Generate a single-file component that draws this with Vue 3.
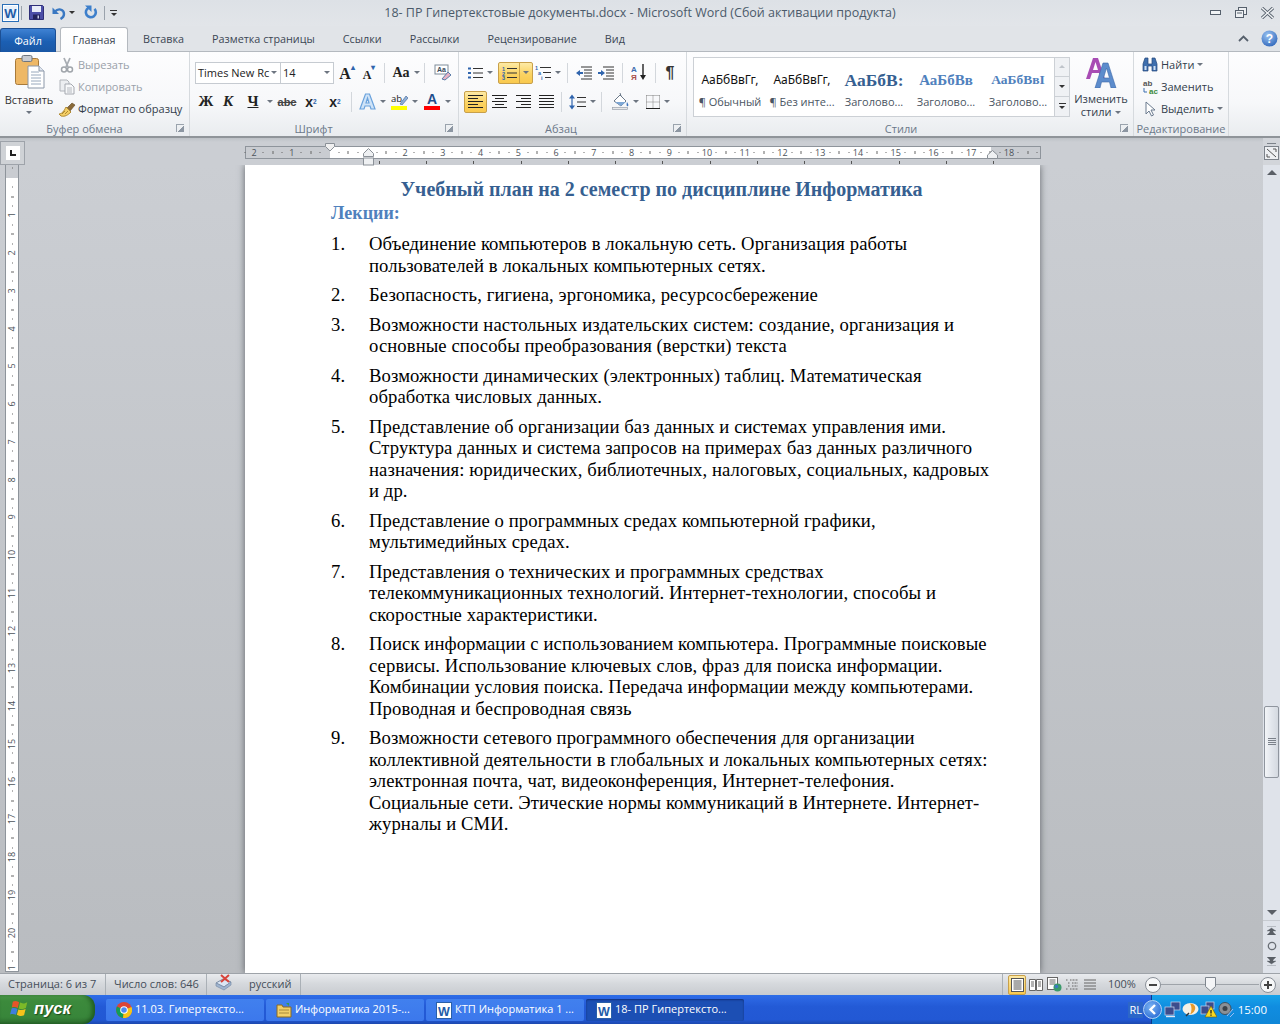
<script setup>
const tabs = ['Вставка', 'Разметка страницы', 'Ссылки', 'Рассылки', 'Рецензирование', 'Вид']

const styleItems = [
  { sample: 'АаБбВвГг,', label: '¶ Обычный', kind: 'normal' },
  { sample: 'АаБбВвГг,', label: '¶ Без инте...', kind: 'normal' },
  { sample: 'АаБбВ:', label: 'Заголово...', kind: 'h1' },
  { sample: 'АаБбВв', label: 'Заголово...', kind: 'h2' },
  { sample: 'АаБбВвІ', label: 'Заголово...', kind: 'h3' },
]

const items = [
  ['Объединение компьютеров в локальную сеть. Организация работы', 'пользователей в локальных компьютерных сетях.'],
  ['Безопасность, гигиена, эргономика, ресурсосбережение'],
  ['Возможности настольных издательских систем: создание, организация и', 'основные способы преобразования (верстки) текста'],
  ['Возможности динамических (электронных) таблиц. Математическая', 'обработка числовых данных.'],
  ['Представление об организации баз данных и системах управления ими.', 'Структура данных и система запросов на примерах баз данных различного', 'назначения: юридических, библиотечных, налоговых, социальных, кадровых', 'и др.'],
  ['Представление о программных средах компьютерной графики,', 'мультимедийных средах.'],
  ['Представления о технических и программных средствах', 'телекоммуникационных технологий. Интернет-технологии, способы и', 'скоростные характеристики.'],
  ['Поиск информации с использованием компьютера. Программные поисковые', 'сервисы. Использование ключевых слов, фраз для поиска информации.', 'Комбинации условия поиска. Передача информации между компьютерами.', 'Проводная и беспроводная связь'],
  ['Возможности сетевого программного обеспечения для организации', 'коллективной деятельности в глобальных и локальных компьютерных сетях:', 'электронная почта, чат, видеоконференция, Интернет-телефония.', 'Социальные сети. Этические нормы коммуникаций в Интернете. Интернет-', 'журналы и СМИ.'],
]

// линейка: 37.75px на сантиметр
const CM = 37.75
const H_ZERO = 83.5
const V_ZERO = 13
const hTicks = []
for (let i = -9; i <= 75; i++) {
  const v = i / 4
  if (i % 4 === 0) {
    if (v !== 0 && v !== 1) hTicks.push({ x: H_ZERO + v * CM, text: String(Math.abs(v)), type: 'num' })
  } else {
    hTicks.push({ x: H_ZERO + v * CM, text: '', type: i % 2 === 0 ? 'line' : 'dot' })
  }
}
const tabStops = []
for (let i = 1; i <= 14; i++) tabStops.push(85.5 + i * 47.25)

const vTicks = []
for (let i = -1; i <= 83; i++) {
  const v = i / 4
  if (i % 4 === 0 && i > 0) vTicks.push({ y: V_ZERO + v * CM, text: String(v), type: 'num' })
  else if (i % 4 !== 0) vTicks.push({ y: V_ZERO + v * CM, text: '', type: i % 2 === 0 ? 'line' : 'dot' })
}
// внизу от числа 21 видна только единица
vTicks.push({ y: 803, text: '1', type: 'num' })

const tasks = [
  { text: '11.03. Гипертексто...', icon: 'chrome' },
  { text: 'Информатика 2015-...', icon: 'folder' },
  { text: 'КТП Информатика 1 ...', icon: 'word' },
  { text: '18- ПР Гипертексто...', icon: 'word', active: true },
]
</script>

<template>
  <div class="app">
    <!-- заголовок окна -->
    <div class="titlebar">
      <div class="qat">
        <svg class="word-ico" width="17" height="18" viewBox="0 0 17 18">
          <rect x=".5" y=".5" width="16" height="17" fill="#fff" stroke="#2a6fb8"/>
          <rect x="2" y="2" width="13" height="14" fill="#e8f1fb"/>
          <text x="8.5" y="14" text-anchor="middle" font-size="13" font-weight="700" fill="#1f5da8" font-family="Liberation Sans, sans-serif">W</text>
        </svg>
        <i class="qat-sep"></i>
        <svg class="save-ico" width="15" height="15" viewBox="0 0 15 15">
          <path d="M.5.5h13l1 1v13H.5z" fill="#4c4fa8" stroke="#2f2f78"/>
          <rect x="3" y="1" width="9" height="6" fill="#e9edf8"/>
          <rect x="4" y="9.5" width="7" height="5" fill="#24245c"/>
          <rect x="8.5" y="10.5" width="1.5" height="3" fill="#c8cdea"/>
        </svg>
        <svg class="undo-ico" width="14" height="14" viewBox="0 0 14 14">
          <path d="M3 5.5c3-3.5 9-2.5 9 2.5 0 2.500-1.500 4-3.500 5" fill="none" stroke="#3a78c2" stroke-width="2.400"/>
          <path d="M.5 1.500v6.500h6.500z" fill="#3a78c2"/>
        </svg>
        <i class="caret dark qat-caret"></i>
        <svg class="redo-ico" width="14" height="15" viewBox="0 0 14 15">
          <path d="M4.500 2.800a5 5 0 1 0 6 1" fill="none" stroke="#3d7fcb" stroke-width="2.600"/>
          <path d="M1 .5h6.500V7z" fill="#3d7fcb"/>
        </svg>
        <i class="qat-sep second"></i>
        <span class="customize"><i></i><i class="caret dark"></i></span>
      </div>
      <div class="doc-title">18- ПР Гипертекстовые документы.docx  -  Microsoft Word (Сбой активации продукта)</div>
      <div class="win-btns">
        <svg width="12" height="6" viewBox="0 0 12 6"><rect x=".5" y=".5" width="10" height="4" fill="#f2f4f6" stroke="#56606c"/></svg>
        <svg width="13" height="12" viewBox="0 0 13 12">
          <rect x="3.500" y=".5" width="8" height="7" fill="#eef0f3" stroke="#56606c"/>
          <rect x=".5" y="3.500" width="8" height="7" fill="#eef0f3" stroke="#56606c"/>
          <rect x="2" y="5.500" width="5" height="1" fill="#56606c"/>
        </svg>
        <svg width="13" height="12" viewBox="0 0 13 12">
          <path d="M1 1l11 10M12 1L1 11" stroke="#56606c" stroke-width="3.200"/>
          <path d="M1 1l11 10M12 1L1 11" stroke="#f2f4f6" stroke-width="1.400"/>
        </svg>
      </div>
    </div>

    <!-- вкладки -->
    <div class="tabsbar">
      <div class="tab-file">Файл</div>
      <div class="tab-active">Главная</div>
      <div v-for="t in tabs" :key="t" class="tab">{{ t }}</div>
      <div class="tabs-right">
        <svg width="11" height="7" viewBox="0 0 11 7"><path d="M1 6l4.500-4.500L10 6" fill="none" stroke="#56606c" stroke-width="1.800"/></svg>
        <svg width="17" height="17" viewBox="0 0 17 17">
          <defs><radialGradient id="helpg" cx=".4" cy=".3" r=".8"><stop offset="0" stop-color="#9cc4f2"/><stop offset="1" stop-color="#2a62b8"/></radialGradient></defs>
          <circle cx="8.500" cy="8.500" r="8" fill="url(#helpg)"/>
          <text x="8.500" y="13" text-anchor="middle" font-size="12" font-weight="700" fill="#fff" font-family="Liberation Sans, sans-serif">?</text>
        </svg>
      </div>
    </div>

    <!-- лента -->
    <div class="ribbon">
      <!-- буфер обмена -->
      <section class="group g-clip">
        <div class="clip-body">
          <div class="paste">
            <svg width="30" height="34" viewBox="0 0 30 34">
              <rect x=".5" y="3.500" width="23" height="26" rx="2" fill="#eeb866" stroke="#a87a3a"/>
              <rect x="7" y=".5" width="10" height="6" rx="1.500" fill="#c9ccd2" stroke="#6e7680"/>
              <path d="M13 11h11l5 5v17H13z" fill="#fff" stroke="#8b97a8"/>
              <path d="M24 11v5h5" fill="#dfe6f0" stroke="#8b97a8"/>
              <path d="M16 17h8M16 20h10M16 23h10M16 26h10M16 29h10" stroke="#98a8bc"/>
            </svg>
            <span class="paste-label">Вставить</span>
            <i class="caret"></i>
          </div>
          <div class="clip-col">
            <div class="small-btn off">
              <svg width="16" height="16" viewBox="0 0 16 16">
                <path d="M5 1l4 9M11 1L7 10" stroke="#a8adb3" stroke-width="1.800"/>
                <circle cx="5" cy="12.500" r="2.500" fill="#fff" stroke="#a0a5ab" stroke-width="1.500"/>
                <circle cx="11" cy="12.500" r="2.500" fill="#fff" stroke="#a0a5ab" stroke-width="1.500"/>
              </svg>
              Вырезать
            </div>
            <div class="small-btn off">
              <svg width="16" height="16" viewBox="0 0 16 16">
                <path d="M1 1h7l2 2v9H1z" fill="#eceef1" stroke="#b0b4ba"/>
                <path d="M6 5h6l3 3v7H6z" fill="#f7f8fa" stroke="#a5a9b0"/>
                <path d="M8 9h5M8 11h5M8 13h5" stroke="#b5b9bf"/>
              </svg>
              Копировать
            </div>
            <div class="small-btn">
              <svg width="18" height="16" viewBox="0 0 18 16">
                <path d="M9 7l5-5 3 2-5 6z" fill="#8a6a3a" stroke="#5e4720" stroke-width=".6"/>
                <path d="M1 13c3 0 5-3 7-7l5 5c-3 3-6 5-10 4z" fill="#f4cf66" stroke="#b08a32"/>
                <path d="M4 13l3-3M7 13l3-3" stroke="#b08a32"/>
              </svg>
              Формат по образцу
            </div>
          </div>
        </div>
        <div class="group-label">Буфер обмена<i class="launcher"></i></div>
      </section>

      <!-- шрифт -->
      <section class="group g-font">
        <div class="rows">
          <div class="row">
            <div class="combo c-font"><span>Times New Rc</span><i class="caret"></i></div>
            <div class="combo c-size"><span>14</span><i class="caret"></i></div>
            <span class="tb w22 ml2 glyph-a big">A<sup class="up">▴</sup></span>
            <span class="tb w22 glyph-a small">A<sup class="down">▾</sup></span>
            <i class="sep"></i>
            <span class="tb w30 glyph-aa">Aa<i class="caret"></i></span>
            <i class="sep s2"></i>
            <span class="tb w22">
              <svg width="18" height="17" viewBox="0 0 18 17">
                <rect x="1" y="1" width="13" height="9" fill="#fff" stroke="#7f8b99"/>
                <text x="7.500" y="8" text-anchor="middle" font-size="7" font-weight="700" fill="#3a4a5c" font-family="Liberation Sans, sans-serif">Aa</text>
                <path d="M8 15l6-7 3 3-6 5z" fill="#e6b2c6" stroke="#5a7ca8"/>
              </svg>
            </span>
          </div>
          <div class="row r2">
            <span class="tb w22 fx">Ж</span>
            <span class="tb w22 fx it">К</span>
            <span class="tb w36 fx ul"><u>Ч</u><i class="caret"></i></span>
            <span class="tb w24 fx strike">abc</span>
            <span class="tb w24 fx script">x<sub>2</sub></span>
            <span class="tb w24 fx script">x<sup>2</sup></span>
            <i class="sep s3"></i>
            <span class="tb w30">
              <svg width="17" height="17" viewBox="0 0 17 17">
                <path d="M6.500 1h4L16 16h-4l-1-3H6l-1 3H1zM7 10h3L8.500 5z" fill="#cfe3f7" stroke="#6aa2dc" stroke-width="1.200"/>
              </svg>
              <i class="caret"></i>
            </span>
            <span class="tb w34">
              <span class="hl-ico">
                <svg width="17" height="12" viewBox="0 0 17 12">
                  <text x="0" y="9" font-size="9.500" fill="#222" font-family="Open Sans, sans-serif">ab</text>
                  <path d="M9 11l6-8 2 2-6 7z" fill="#8fb0d8" stroke="#4f6f9c" stroke-width=".7"/>
                </svg>
                <b class="hl-bar yellow"></b>
              </span>
              <i class="caret"></i>
            </span>
            <span class="tb w32">
              <span class="hl-ico">
                <span class="color-a">A</span>
                <b class="hl-bar red"></b>
              </span>
              <i class="caret"></i>
            </span>
          </div>
        </div>
        <div class="group-label">Шрифт<i class="launcher"></i></div>
      </section>

      <!-- абзац -->
      <section class="group g-para">
        <div class="rows">
          <div class="row">
            <span class="tb w32">
              <svg width="15" height="14" viewBox="0 0 15 14">
                <path d="M0 1.500h3v2H0zM0 6h3v2H0zM0 10.500h3v2H0z" fill="#2f64ad"/>
                <path d="M5 2.500h10M5 7h10M5 11.500h10" stroke="#333"/>
              </svg>
              <i class="caret"></i>
            </span>
            <span class="num-split ml2">
              <span class="num-main">
                <svg width="15" height="14" viewBox="0 0 15 14">
                  <text x="0" y="4.500" font-size="5.500" font-weight="700" fill="#2f64ad" font-family="Liberation Sans, sans-serif">1</text>
                  <text x="0" y="9.500" font-size="5.500" font-weight="700" fill="#2f64ad" font-family="Liberation Sans, sans-serif">2</text>
                  <text x="0" y="14" font-size="5.500" font-weight="700" fill="#2f64ad" font-family="Liberation Sans, sans-serif">3</text>
                  <path d="M5 2.500h10M5 7h10M5 11.500h10" stroke="#333"/>
                </svg>
              </span>
              <span class="num-drop"><i class="caret"></i></span>
            </span>
            <span class="tb w26 ml2">
              <svg width="16" height="15" viewBox="0 0 16 15">
                <text x="0" y="5" font-size="5.500" font-weight="700" fill="#2f64ad" font-family="Liberation Sans, sans-serif">1</text>
                <text x="3" y="10" font-size="5.500" font-weight="700" fill="#2f64ad" font-family="Liberation Sans, sans-serif">a</text>
                <text x="6" y="15" font-size="5.500" font-weight="700" fill="#2f64ad" font-family="Liberation Sans, sans-serif">i</text>
                <path d="M5 2.500h11M8 7.500h8M10 12.500h6" stroke="#333"/>
              </svg>
              <i class="caret"></i>
            </span>
            <i class="sep s4"></i>
            <span class="tb w22">
              <svg width="16" height="14" viewBox="0 0 16 14">
                <path d="M5 1h11M8 4h8M8 7h8M8 10h8M5 13h11" stroke="#333"/>
                <path d="M0 7l4-3v2h3v2H4v2z" fill="#2f64ad"/>
              </svg>
            </span>
            <span class="tb w22">
              <svg width="16" height="14" viewBox="0 0 16 14">
                <path d="M5 1h11M8 4h8M8 7h8M8 10h8M5 13h11" stroke="#333"/>
                <path d="M7 7L3 4v2H0v2h3v2z" fill="#2f64ad"/>
              </svg>
            </span>
            <i class="sep s5"></i>
            <span class="tb w22">
              <svg width="16" height="17" viewBox="0 0 16 17">
                <text x="0" y="7.500" font-size="8" font-weight="700" fill="#3d6cad" font-family="Liberation Sans, sans-serif">А</text>
                <text x="0" y="16" font-size="8" font-weight="700" fill="#a8504a" font-family="Liberation Sans, sans-serif">Я</text>
                <path d="M12 0v13" stroke="#222" stroke-width="1.400"/>
                <path d="M9 11h6l-3 5z" fill="#222"/>
              </svg>
            </span>
            <i class="sep s5"></i>
            <span class="tb w22 pilcrow">¶</span>
          </div>
          <div class="row r2">
            <span class="tb align-on w23">
              <svg width="15" height="13" viewBox="0 0 15 13"><path d="M0 .5h15M0 3.500h10M0 6.500h15M0 9.500h10M0 12.500h15" stroke="#222"/></svg>
            </span>
            <span class="tb w24">
              <svg width="15" height="13" viewBox="0 0 15 13"><path d="M0 .5h15M3 3.500h9M0 6.500h15M3 9.500h9M0 12.500h15" stroke="#222"/></svg>
            </span>
            <span class="tb w24">
              <svg width="15" height="13" viewBox="0 0 15 13"><path d="M0 .5h15M5 3.500h10M0 6.500h15M5 9.500h10M0 12.500h15" stroke="#222"/></svg>
            </span>
            <span class="tb w23">
              <svg width="15" height="13" viewBox="0 0 15 13"><path d="M0 .5h15M0 3.500h15M0 6.500h15M0 9.500h15M0 12.500h15" stroke="#222"/></svg>
            </span>
            <i class="sep s6"></i>
            <span class="tb w30">
              <svg width="17" height="16" viewBox="0 0 17 16">
                <path d="M3 .5l3 4H0zM3 15.500l3-4H0z" fill="#2f64ad"/>
                <path d="M2.400 4h1.200v8H2.400z" fill="#2f64ad"/>
                <path d="M8 3.500h9M8 8h9M8 12.500h9" stroke="#333"/>
              </svg>
              <i class="caret"></i>
            </span>
            <i class="sep s7"></i>
            <span class="tb w36">
              <svg width="17" height="17" viewBox="0 0 17 17">
                <path d="M2 8l6-6 6 6-5 5z" fill="#fff" stroke="#6a7888"/>
                <path d="M3 9h11l-5 4z" fill="#7fa8d6"/>
                <path d="M8 0l1 3" stroke="#6a7888"/>
                <path d="M15 9c1 2 2 3 1 4s-2-.5-1-4z" fill="#3d74bd"/>
                <rect x=".5" y="14.500" width="15" height="2" fill="#e8e8e8" stroke="#9aa2ac" stroke-width=".7"/>
              </svg>
              <i class="caret"></i>
            </span>
            <span class="tb w30">
              <svg width="14" height="14" viewBox="0 0 14 14">
                <path d="M.5.5h13M.5 7h13M7 .5v13M.5.5v13M13.500.5v13" stroke="#7f7f7f" stroke-dasharray="1 1" fill="none"/>
                <path d="M0 13.500h14" stroke="#222"/>
              </svg>
              <i class="caret"></i>
            </span>
          </div>
        </div>
        <div class="group-label">Абзац<i class="launcher"></i></div>
      </section>

      <!-- стили -->
      <section class="group g-styles">
        <div class="styles-body">
          <div class="gallery">
            <div v-for="(s, i) in styleItems" :key="i" class="style-item" :class="s.kind">
              <div class="sample">{{ s.sample }}</div>
              <div class="style-name">{{ s.label }}</div>
            </div>
            <div class="gallery-scroll">
              <span class="up"><i class="caret up-c"></i></span>
              <span><i class="caret dark"></i></span>
              <span class="more"><b></b><i class="caret dark"></i></span>
            </div>
          </div>
          <div class="change-styles">
            <svg width="32" height="30" viewBox="0 0 32 30">
              <path d="M8 0h5l7 21h-4l-2-6H7l-2 6H1zM8 12h5L10.500 4z" fill="#a84cb4"/>
              <path d="M18 5h5l8 25h-5l-1.500-6h-8L15 30h-5zM18.500 20h6l-3-10z" fill="#5c8ccc" stroke="#3c68a8" stroke-width=".6"/>
            </svg>
            <span>Изменить</span>
            <span>стили <i class="caret"></i></span>
          </div>
        </div>
        <div class="group-label">Стили<i class="launcher"></i></div>
      </section>

      <!-- редактирование -->
      <section class="group g-edit">
        <div class="edit-col">
          <div class="small-btn">
            <svg width="16" height="15" viewBox="0 0 16 15">
              <path d="M1 7l2-6h3v6h4V1h3l2 6v7h-5V9H6v5H1z" fill="#3f6fae" stroke="#23467a" stroke-width=".7"/>
              <rect x="2.500" y="9" width="2" height="4" fill="#cfe0f4"/>
              <rect x="11.500" y="9" width="2" height="4" fill="#cfe0f4"/>
            </svg>
            Найти <i class="caret"></i>
          </div>
          <div class="small-btn">
            <svg width="16" height="16" viewBox="0 0 16 16">
              <text x="1" y="7" font-size="8" font-weight="700" fill="#555" font-family="Liberation Sans, sans-serif">ab</text>
              <text x="7" y="15" font-size="8" font-weight="700" fill="#3c8a3c" font-family="Liberation Sans, sans-serif">ac</text>
              <path d="M2 9v4h3" fill="none" stroke="#3a6fb0"/>
            </svg>
            Заменить
          </div>
          <div class="small-btn">
            <svg width="16" height="16" viewBox="0 0 16 16">
              <path d="M4 1v12l3-3 2.500 5 2-1-2.500-5h4z" fill="#fff" stroke="#6a7a8e"/>
            </svg>
            Выделить <i class="caret"></i>
          </div>
        </div>
        <div class="group-label">Редактирование</div>
      </section>
    </div>

    <!-- горизонтальная линейка -->
    <div class="ruler-row">
      <div class="tab-sel"><b><i></i></b></div>
      <div class="h-ruler">
        <div class="h-white"></div>
        <template v-for="(t, i) in hTicks" :key="i">
          <span class="ht" :class="t.type" :style="{ left: t.x + 'px' }">{{ t.text }}</span>
        </template>
        <svg class="indent-top" width="13" height="9" viewBox="0 0 13 9"><path d="M.5.5h9v3l-4.500 4.500L.5 3.500z" fill="#f0f0f0" stroke="#8a9097"/></svg>
        <svg class="indent-left" width="11" height="19" viewBox="0 0 11 19">
          <path d="M.5 5.500L5.500.5l5 5v3H.5z" fill="#eef0f2" stroke="#8a9097"/>
          <rect x=".5" y="10" width="10" height="7" fill="#eef0f2" stroke="#8a9097"/>
        </svg>
        <svg class="indent-right" width="11" height="9" viewBox="0 0 11 9"><path d="M.5 5L5.500.5l5 4.500v3.500H.5z" fill="#eef0f2" stroke="#8a9097"/></svg>
        <i v-for="s in tabStops" :key="s" class="stop" :style="{ left: s + 'px' }"></i>
      </div>
      <div class="ruler-toggle">
        <b></b>
        <svg width="15" height="14" viewBox="0 0 15 14">
          <rect x=".5" y=".5" width="14" height="13" fill="#eef0f3" stroke="#7c828a"/>
          <path d="M3 3l9 8M9 3h3v3M3 8v3h3" fill="none" stroke="#555"/>
        </svg>
      </div>
    </div>

    <!-- рабочая область -->
    <div class="main">
      <div class="rail">
        <div class="v-ruler">
          <template v-for="(t, i) in vTicks" :key="i">
            <span class="vt" :class="t.type" :style="{ top: t.y + 'px' }"><em>{{ t.text }}</em></span>
          </template>
        </div>
      </div>
      <div class="workspace">
        <div class="page">
          <h1 class="doc-h">Учебный план на 2 семестр по дисциплине Информатика</h1>
          <h2 class="doc-sub">Лекции:</h2>
          <ol class="doc-list">
            <li v-for="(lines, i) in items" :key="i">
              <span class="n">{{ i + 1 }}.</span>
              <div class="li-text">
                <div v-for="l in lines" :key="l">{{ l }}</div>
              </div>
            </li>
          </ol>
        </div>
      </div>
      <div class="vscroll">
        <i class="arr-up"></i>
        <div class="thumb"><b></b></div>
        <div class="spring"></div>
        <i class="arr-down"></i>
        <div class="browse">
          <svg width="9" height="9" viewBox="0 0 9 9"><path d="M0 .5h9M4.500 2L0 5h3v1L0 9h9L6 6V5h3z" fill="#5a5f66" stroke="#5a5f66" stroke-width=".3"/></svg>
          <svg width="10" height="10" viewBox="0 0 10 10"><circle cx="5" cy="5" r="3.700" fill="none" stroke="#6a6f76" stroke-width="1.300"/></svg>
          <svg width="9" height="9" viewBox="0 0 9 9"><path d="M0 8.500h9M4.500 7L0 4h3V3L0 0h9L6 3v1h3z" fill="#5a5f66" stroke="#5a5f66" stroke-width=".3"/></svg>
        </div>
      </div>
    </div>

    <!-- строка состояния -->
    <div class="status">
      <span class="st-cell c1">Страница: 6 из 7</span>
      <span class="st-cell c2">Число слов: 646</span>
      <span class="st-cell c3">
        <svg width="18" height="18" viewBox="0 0 18 18">
          <path d="M1 9l7-4 8 3-7 5z" fill="#dbe6f4" stroke="#7a8ca6"/>
          <path d="M1 9v3l8 4 7-5V8l-7 5z" fill="#9fb4d0" stroke="#7a8ca6" stroke-width=".7"/>
          <path d="M6 1l8 7M14 1L6 8" stroke="#d8433a" stroke-width="2"/>
        </svg>
        <em>русский</em>
      </span>
      <div class="st-right">
        <span class="view on">
          <svg width="13" height="14" viewBox="0 0 13 14"><rect x=".5" y=".5" width="12" height="13" fill="#fff" stroke="#555"/><path d="M2.500 3h8M2.500 5h8M2.500 7h8M2.500 9h8M2.500 11h8" stroke="#555"/></svg>
        </span>
        <span class="view">
          <svg width="14" height="14" viewBox="0 0 14 14"><path d="M.5 1.500h6v11h-6zM7.500 1.500h6v11h-6z" fill="#fff" stroke="#666"/><path d="M2 4h3M2 6h3M2 8h3M9 4h3M9 6h3M9 8h3" stroke="#666"/></svg>
        </span>
        <span class="view">
          <svg width="15" height="15" viewBox="0 0 15 15"><rect x=".5" y=".5" width="10" height="12" fill="#fff" stroke="#666"/><path d="M2.500 3h6M2.500 5h6M2.500 7h6" stroke="#666"/><circle cx="10.500" cy="10.500" r="4" fill="#3a9a6a"/><circle cx="9.500" cy="9.500" r="1.800" fill="#3a78c2"/></svg>
        </span>
        <span class="view">
          <svg width="14" height="14" viewBox="0 0 14 14"><path d="M1 2h2M5 2h8M3 5h2M7 5h6M3 8h2M7 8h6M1 11h2M5 11h8" stroke="#666" stroke-dasharray="1 .5"/></svg>
        </span>
        <span class="view">
          <svg width="14" height="14" viewBox="0 0 14 14"><path d="M1 2h12M1 5h12M1 8h12M1 11h12" stroke="#666"/></svg>
        </span>
        <span class="zoom-val">100%</span>
        <span class="zoom-btn"><i></i></span>
        <div class="slider"><svg width="11" height="15" viewBox="0 0 11 15"><path d="M.5.5h10v9L5.500 14 .5 9.500z" fill="#f4f5f7" stroke="#7e858e"/></svg></div>
        <span class="zoom-btn plus"><i></i></span>
      </div>
    </div>

    <!-- панель задач -->
    <div class="taskbar">
      <div class="start">
        <svg width="20" height="19" viewBox="0 0 22 21">
          <path d="M3 3c2-1 4-1 7 .5L8.500 10c-2-1-4-1.500-6.500-.5z" fill="#e5552a"/>
          <path d="M11 4c3 1.500 5 1 8-.5L17.500 10c-3 1.500-5 1.500-8 .5z" fill="#7cb928"/>
          <path d="M1.700 10.500c2-1 4.500-.5 6.500.5L6.500 17.500c-2-1-4-1.500-6.500-.5z" fill="#3f7fdc"/>
          <path d="M9.200 11.500c3 1 5 1 8-.5L15.500 18c-3 1.500-5 1-8-.5z" fill="#f5c21b"/>
        </svg>
        <span>пуск</span>
      </div>
      <div class="tasks">
        <div v-for="t in tasks" :key="t.text" class="task" :class="{ active: t.active }">
          <svg v-if="t.icon === 'chrome'" width="16" height="16" viewBox="0 0 16 16">
            <circle cx="8" cy="8" r="8" fill="#dc4437"/>
            <path d="M8 8L1 4.500A8 8 0 0 0 7 16z" fill="#109d58"/>
            <path d="M8 8l7.500-3A8 8 0 0 1 7 16z" fill="#f5c518"/>
            <circle cx="8" cy="8" r="3.800" fill="#fff"/>
            <circle cx="8" cy="8" r="2.800" fill="#4a8af4"/>
          </svg>
          <svg v-else-if="t.icon === 'folder'" width="16" height="16" viewBox="0 0 16 16">
            <path d="M1 3h5l1 2h8v10H1z" fill="#f0cf6a" stroke="#8a6a24"/>
            <path d="M3 8h10M3 11h10" stroke="#a88a3a"/>
            <path d="M10 1l3 0v3z" fill="#3a9a4a"/>
          </svg>
          <svg v-else width="16" height="17" viewBox="0 0 16 17">
            <rect x=".5" y=".5" width="15" height="16" fill="#fff" stroke="#2a5fa8"/>
            <text x="8" y="13.500" text-anchor="middle" font-size="12.500" font-weight="700" fill="#1f5da8" font-family="Liberation Sans, sans-serif">W</text>
          </svg>
          <span>{{ t.text }}</span>
        </div>
      </div>
      <span class="lang">RL</span>
      <div class="tray">
        <span class="chevron">
          <svg width="9" height="11" viewBox="0 0 9 11"><path d="M7 1L2.500 5.500 7 10" fill="none" stroke="#fff" stroke-width="2.400"/></svg>
        </span>
        <svg class="tray-ico first" width="17" height="17" viewBox="0 0 17 17">
          <rect x="7" y="1" width="9" height="8" fill="#3c4c8c" stroke="#cfd8ee" stroke-width=".7"/>
          <rect x="1" y="6" width="9" height="8" fill="#3c4c8c" stroke="#cfd8ee" stroke-width=".7"/>
          <path d="M2 15.500h9" stroke="#dfe6f6" stroke-width="1.400"/>
        </svg>
        <svg class="tray-ico" width="17" height="15" viewBox="0 0 17 15">
          <ellipse cx="8.500" cy="7" rx="8" ry="6" fill="#f4f1e6"/>
          <path d="M8 1.500c4 0 6 3 5 6s-3 4-5 5c2-3 2-8 0-11z" fill="#e99a2a"/>
          <path d="M4 14l3-3" stroke="#333" stroke-width="1.400"/>
        </svg>
        <svg class="tray-ico" width="17" height="17" viewBox="0 0 17 17">
          <rect x="6" y="1" width="8" height="7" fill="#3c4c8c" stroke="#cfd8ee" stroke-width=".7"/>
          <rect x="1" y="5" width="8" height="8" fill="#3c4c8c" stroke="#cfd8ee" stroke-width=".7"/>
          <path d="M11 5l6 11H5z" fill="#f8d820" stroke="#6a5a10" stroke-width=".6"/>
          <path d="M11 9v3.500M11 13.500v1.200" stroke="#222" stroke-width="1.300"/>
        </svg>
        <svg class="tray-ico" width="17" height="17" viewBox="0 0 17 17">
          <circle cx="7" cy="7.500" r="6" fill="#8a9096" stroke="#3c4248" stroke-width=".8"/>
          <circle cx="7" cy="7.500" r="2.500" fill="#3c4248"/>
          <path d="M9 15l6-7M12 16l4-4" stroke="#9fbcf0"/>
        </svg>
        <span class="clock">15:00</span>
      </div>
    </div>
  </div>
</template>

<style>
html, body { margin: 0; padding: 0; background: #c9ccd1; }
</style>

<style scoped>
.app {
  width: 1280px;
  height: 1024px;
  overflow: hidden;
  display: flex;
  flex-direction: column;
  font-family: "Open Sans", "Noto Sans", sans-serif;
  font-size: 11px;
  color: #3b4654;
  background: #c9ccd1;
}
i, em { font-style: normal; }

.caret {
  display: inline-block;
  width: 0;
  height: 0;
  border-left: 3px solid transparent;
  border-right: 3px solid transparent;
  border-top: 3px solid #6d7580;
  flex: none;
}
.caret.dark { border-top-color: #333; }

/* title */
.titlebar {
  height: 26px;
  display: grid;
  grid-template-columns: 1fr auto 1fr;
  align-items: center;
  background: linear-gradient(#dde1e6, #e2e5e9);
}
.qat { display: flex; align-items: center; padding-left: 2px; }
.qat-sep { width: 1px; height: 14px; background: #9aa2ac; margin: 0 7px 0 2px; }
.qat-sep.second { margin: 0 5px 0 6px; }
.undo-ico { margin-left: 8px; }
.qat-caret { margin: 0 9px 0 3px; }
.customize { display: inline-flex; flex-direction: column; align-items: center; gap: 2px; width: 7px; }
.customize i:first-child { width: 7px; height: 1px; background: #333; }
.doc-title {
  font-size: 12.500px;
  color: #4b5a6a;
  white-space: pre;
}
.win-btns { display: flex; justify-content: flex-end; align-items: center; gap: 13px; padding-right: 6px; }

/* tabs */
.tabsbar {
  height: 26px;
  display: flex;
  align-items: flex-end;
  background: #e1e4e8;
  box-sizing: border-box;
  border-bottom: 1px solid #b4b9bf;
  font-size: 10.800px;
}
.tab-file {
  width: 56px;
  height: 24px;
  margin-bottom: -1px;
  display: flex;
  align-items: center;
  justify-content: center;
  color: #fff;
  background: linear-gradient(#3f82d3, #1b5fb3 55%, #1a57a5);
  border: 1px solid #1c4f94;
  border-bottom: 0;
  border-radius: 3px 3px 0 0;
  box-sizing: border-box;
}
.tab-active {
  width: 68px;
  height: 25px;
  margin: 0 1px -1px 4px;
  display: flex;
  align-items: center;
  justify-content: center;
  background: linear-gradient(#fff, #fbfcfd);
  border: 1px solid #b4b9bf;
  border-bottom: 0;
  border-radius: 3px 3px 0 0;
  box-sizing: border-box;
  color: #3b4654;
}
.tab { padding: 0 14px; height: 24px; line-height: 24px; white-space: nowrap; }
.tabs-right {
  margin-left: auto;
  display: flex;
  align-items: center;
  gap: 12px;
  height: 25px;
  padding-right: 2px;
}

/* ribbon */
.ribbon {
  height: 86px;
  box-sizing: border-box;
  display: flex;
  background: linear-gradient(#fdfdfe, #f7f8fa 60%, #e9ecef);
  border-bottom: 2px solid #8f9499;
}
.group {
  position: relative;
  display: flex;
  flex-direction: column;
  box-sizing: border-box;
  border-right: 1px solid #d6dade;
}
.g-clip { width: 190px; }
.g-font { width: 269px; padding-left: 5px; }
.g-para { width: 228px; padding-left: 5px; }
.g-styles { width: 447px; padding-left: 6px; }
.g-edit { width: 95px; }
.group-label {
  margin-top: auto;
  height: 16px;
  line-height: 18px;
  text-align: center;
  color: #6b7889;
  white-space: nowrap;
}
.g-clip .group-label { padding-right: 20px; }
.g-font .group-label { padding-right: 26px; }
.g-para .group-label { padding-right: 28px; }
.g-styles .group-label { padding-right: 24px; }
.launcher {
  position: absolute;
  right: 5px;
  bottom: 4px;
  width: 7px;
  height: 7px;
  border: 1px solid #9aa3ad;
  border-width: 1px 0 0 1px;
  background: linear-gradient(135deg, transparent 55%, #8c96a2 55%);
}

.clip-body { display: flex; height: 69px; }
.paste {
  width: 58px;
  display: flex;
  flex-direction: column;
  align-items: center;
  padding-top: 3px;
  box-sizing: border-box;
  color: #333;
}
.paste svg { margin-left: 2px; }
.paste-label { margin-top: 3px; line-height: 15px; }
.paste .caret { margin-top: 4px; }
.clip-col, .edit-col {
  display: flex;
  flex-direction: column;
  padding-top: 2px;
}
.small-btn {
  height: 22px;
  display: flex;
  align-items: center;
  gap: 2px;
  white-space: nowrap;
  color: #333e4c;
}
.small-btn.off { color: #9aa1aa; }
.small-btn svg { flex: none; width: 18px; }
.edit-col { padding: 2px 0 0 7px; height: 69px; box-sizing: border-box; }
.edit-col .caret { margin-left: 1px; }

.rows { display: flex; flex-direction: column; padding-top: 10px; gap: 7px; }
.row { display: flex; align-items: center; height: 22px; }
.tb {
  display: inline-flex;
  align-items: center;
  justify-content: center;
  gap: 4px;
  height: 22px;
  flex: none;
  color: #222;
}
.w22 { width: 22px; }
.w23 { width: 23px; }
.w24 { width: 24px; }
.w26 { width: 26px; }
.w30 { width: 30px; }
.w32 { width: 32px; }
.w34 { width: 34px; }
.w36 { width: 36px; }
.ml2 { margin-left: 2px; }
.sep { width: 1px; height: 20px; background: #d3d7dc; flex: none; margin: 0 6px 0 4px; }
.sep.s2 { margin: 0 7px 0 3px; }
.sep.s3 { margin: 0 5px 0 4px; }
.sep.s4 { margin: 0 5px 0 6px; }
.sep.s5 { margin: 0 5px; }
.sep.s6 { margin: 0 5px 0 3px; }
.sep.s7 { margin: 0 5px 0 4px; }

.combo {
  height: 22px;
  box-sizing: border-box;
  background: #fff;
  border: 1px solid #c6cbd1;
  display: flex;
  align-items: center;
  justify-content: space-between;
  padding: 0 3px 0 2px;
  color: #222;
  flex: none;
  white-space: nowrap;
  overflow: hidden;
}
.c-font { width: 86px; }
.c-size { width: 54px; margin-left: -1px; }

.glyph-a { font-family: "Liberation Serif", serif; font-weight: 700; color: #222; align-items: flex-end; gap: 0; padding-bottom: 2px; box-sizing: border-box; }
.glyph-a.big { font-size: 16px; line-height: 16px; }
.glyph-a.small { font-size: 12px; line-height: 13px; }
.glyph-a sup { font-size: 8px; color: #2f64ad; line-height: 8px; align-self: flex-start; margin-top: 2px; }
.glyph-aa { font-family: "Liberation Serif", serif; font-weight: 700; font-size: 14px; }
.fx { font-family: "Liberation Serif", serif; font-weight: 700; font-size: 15px; }
.fx.it { font-style: italic; }
.fx.ul { gap: 8px; padding-left: 6px; box-sizing: border-box; }
.fx.strike { font-size: 11px; text-decoration: line-through; font-family: "Liberation Sans", sans-serif; color: #444; }
.fx.script { gap: 0; font-size: 14px; font-family: "Liberation Sans", sans-serif; }
.fx.script sub, .fx.script sup { font-size: 6.500px; color: #2f64ad; line-height: 7px; }
.hl-ico { display: inline-flex; flex-direction: column; align-items: center; width: 17px; }
.hl-bar { display: block; width: 16px; height: 4px; margin-top: 1px; }
.hl-bar.yellow { background: #ffff00; }
.hl-bar.red { background: #ff0000; }
.color-a { font-family: "Liberation Sans", sans-serif; font-weight: 700; font-size: 14px; line-height: 12px; color: #1f4e8c; }

.num-split {
  width: 35px;
  height: 22px;
  box-sizing: border-box;
  display: flex;
  background: linear-gradient(#fdeaa6, #fbd362 55%, #f9c94e);
  border: 1px solid #c8a04a;
  border-radius: 2px;
  flex: none;
}
.num-main { flex: 1; display: flex; align-items: center; justify-content: center; border-right: 1px solid #c8a04a; }
.num-drop { width: 12px; display: flex; align-items: center; justify-content: center; }
.pilcrow { font-family: "Liberation Sans", sans-serif; font-weight: 700; font-size: 16px; color: #333; margin-left: -2px; }
.align-on {
  background: linear-gradient(#fdeaa6, #fbd362 55%, #f9c94e);
  border: 1px solid #c8a04a;
  border-radius: 2px;
  box-sizing: border-box;
}

/* styles gallery */
.styles-body { display: flex; height: 69px; padding-top: 5px; box-sizing: border-box; }
.gallery {
  width: 377px;
  height: 60px;
  box-sizing: border-box;
  background: #fff;
  border: 1px solid #ccd0d5;
  display: flex;
  flex: none;
}
.style-item { width: 72px; overflow: hidden; flex: none; text-align: center; padding-top: 13px; box-sizing: border-box; }
.sample {
  height: 18px;
  line-height: 18px;
  white-space: nowrap;
  overflow: hidden;
  font-family: "Noto Sans", "Open Sans", sans-serif;
  font-size: 12px;
  color: #111;
}
.h1 .sample { font-family: "Liberation Serif", serif; font-weight: 700; font-size: 17.500px; color: #365f91; }
.h2 .sample { font-family: "Liberation Serif", serif; font-weight: 700; font-size: 15px; color: #4f81bd; }
.h3 .sample { font-family: "Liberation Serif", serif; font-weight: 700; font-size: 13.500px; color: #4f81bd; }
.style-name { margin-top: 5px; white-space: nowrap; color: #4a5562; }
.gallery-scroll { margin-left: auto; width: 14px; display: flex; flex-direction: column; border-left: 1px solid #ccd0d5; flex: none; }
.gallery-scroll span { flex: 1; display: flex; flex-direction: column; align-items: center; justify-content: center; gap: 2px; border-bottom: 1px solid #ccd0d5; background: #eff1f4; }
.gallery-scroll span:last-child { border-bottom: 0; }
.gallery-scroll .up-c { border-top: 0; border-bottom: 3px solid #bfc4ca; }
.gallery-scroll .more b { width: 7px; height: 1px; background: #333; }
.change-styles {
  width: 62px;
  display: flex;
  flex-direction: column;
  align-items: center;
  line-height: 13px;
  color: #333e4c;
}
.change-styles svg { margin: 1px 0 4px; height: 30px; }
.change-styles .caret { vertical-align: middle; margin-left: 1px; }

/* ruler */
.ruler-row {
  height: 27px;
  position: relative;
  display: flex;
  background: linear-gradient(#bdc1c6, #cbced3 4px, #cbced3);
}
.tab-sel {
  width: 25px;
  height: 24px;
  margin-top: 3px;
  box-sizing: border-box;
  border: 1px solid #9ea3aa;
  background: #cfd2d6;
  display: flex;
  align-items: center;
  justify-content: center;
  flex: none;
}
.tab-sel b {
  width: 14px;
  height: 14px;
  background: #fff;
  box-sizing: border-box;
  position: relative;
  display: block;
}
.tab-sel b i {
  position: absolute;
  left: 4px;
  top: 4px;
  width: 6px;
  height: 6px;
  border-left: 2px solid #222;
  border-bottom: 2px solid #222;
  box-sizing: border-box;
}
.h-ruler {
  position: relative;
  margin: 8px 0 0 220px;
  width: 796px;
  height: 13px;
  box-sizing: border-box;
  border: 1px solid #8e949b;
  background: #c9ccd1;
  flex: none;
}
.h-white { position: absolute; left: 84px; width: 661px; top: 0; bottom: 0; background: #fff; }
.ht {
  position: absolute;
  top: 0;
  transform: translateX(-50%);
  line-height: 11px;
  font-size: 9px;
  color: #4c5259;
}
.ht.dot { width: 1px; height: 1px; background: #666; top: 5px; }
.ht.line { width: 1px; height: 3px; background: #666; top: 4px; }
.indent-top { position: absolute; left: 79px; top: -4px; }
.indent-left { position: absolute; left: 117px; top: 1px; }
.indent-right { position: absolute; left: 741px; top: 3px; }
.stop { position: absolute; top: 14px; width: 1px; height: 3px; background: #555; }
.ruler-toggle {
  margin-left: auto;
  width: 17px;
  display: flex;
  flex-direction: column;
  align-items: center;
  padding-top: 5px;
  box-sizing: border-box;
  gap: 2px;
  background: #d2d5da;
}
.ruler-toggle b { width: 9px; height: 1px; background: #7c828a; }

/* main */
.main {
  height: 808px;
  display: flex;
  background: linear-gradient(#cbced3, #b9bcc0);
}
.rail { width: 24px; flex: none; }
.v-ruler {
  position: relative;
  margin-left: 5px;
  width: 14px;
  height: 807px;
  box-sizing: border-box;
  border: 1px solid #8e949b;
  border-width: 0 1px 1px;
  background: linear-gradient(#c9ccd1 13px, #fff 13px);
  overflow: hidden;
}
.vt {
  position: absolute;
  left: 0;
  width: 12px;
  text-align: center;
  transform: translateY(-50%);
  color: #4c5259;
  font-size: 9px;
  line-height: 10px;
}
.vt em { display: inline-block; transform: rotate(-90deg); }
.vt.dot { width: 1px; height: 1px; left: 6px; background: #666; }
.vt.line { width: 3px; height: 1px; left: 5px; background: #666; }
.workspace { flex: 1; min-width: 0; overflow: hidden; }
.page {
  width: 795px;
  height: 808px;
  margin-left: 221px;
  box-sizing: border-box;
  padding: 12px 48px 0 86px;
  background: #fff;
  box-shadow: 0 0 7px rgba(60, 64, 70, .75);
  font-family: "Liberation Serif", "Noto Sans CJK SC", serif;
  font-size: 18.670px;
  color: #000;
}
.doc-h {
  margin: 0;
  font-size: 20px;
  line-height: 24px;
  font-weight: 700;
  text-align: center;
  color: #365f91;
  white-space: nowrap;
}
.doc-sub {
  margin: 1px 0 9.500px;
  font-size: 18px;
  line-height: 22px;
  font-weight: 700;
  color: #4f81bd;
}
.doc-list { list-style: none; margin: 0; padding: 0; display: flex; flex-direction: column; gap: 8px; letter-spacing: .09px; }
.doc-list li { display: flex; line-height: 21.500px; white-space: nowrap; }
.doc-list .n { width: 38px; flex: none; }
.vscroll {
  width: 17px;
  flex: none;
  display: flex;
  flex-direction: column;
  align-items: center;
  background: #dfe3ea;
}
.arr-up, .arr-down { width: 0; height: 0; border-left: 5px solid transparent; border-right: 5px solid transparent; flex: none; }
.arr-up { border-bottom: 5px solid #5a5f66; margin-top: 5px; }
.arr-down { border-top: 5px solid #5a5f66; margin-bottom: 5px; }
.thumb {
  margin-top: 531px;
  width: 15px;
  height: 72px;
  box-sizing: border-box;
  border: 1px solid #8f959e;
  border-radius: 2px;
  background: linear-gradient(90deg, #f3f5f8, #e2e6ec 50%, #d4d9e0);
  display: flex;
  align-items: center;
  justify-content: center;
  flex: none;
}
.thumb b { width: 8px; height: 7px; background: repeating-linear-gradient(#7b818a 0 1px, transparent 1px 2px); }
.spring { flex: 1; }
.browse {
  width: 100%;
  height: 53px;
  border-top: 1px solid #c6cad0;
  display: flex;
  flex-direction: column;
  align-items: center;
  justify-content: space-around;
  box-sizing: border-box;
  padding: 2px 0 4px;
}

/* status */
.status {
  height: 23px;
  box-sizing: border-box;
  border-top: 1px solid #9ea3a9;
  display: flex;
  align-items: center;
  background: linear-gradient(#e9ebee, #d6d9dd 45%, #c8cbd0);
  color: #454e5a;
}
.st-cell { height: 100%; display: flex; align-items: center; border-right: 1px solid #aab0b6; box-sizing: border-box; white-space: nowrap; padding-bottom: 3px; }
.c1 { width: 106px; padding-left: 8px; }
.c2 { width: 101px; padding-left: 8px; }
.c3 { width: 94px; padding-left: 8px; gap: 16px; }
.st-right { margin-left: auto; display: flex; align-items: center; height: 100%; padding-left: 5px; border-left: 1px solid #aab0b6; box-sizing: border-box; }
.view { width: 18px; height: 20px; display: flex; align-items: center; justify-content: center; box-sizing: border-box; }
.view.on { background: linear-gradient(#fdeaa6, #f9c94e); border: 1px solid #c8a04a; border-radius: 2px; margin-right: 1px; }
.zoom-val { width: 36px; margin: 0 0 3px 9px; }
.zoom-btn {
  width: 14px;
  height: 14px;
  margin-left: 1px;
  border-radius: 50%;
  border: 1px solid #8a9098;
  background: #f6f7f8;
  display: flex;
  align-items: center;
  justify-content: center;
  position: relative;
}
.zoom-btn i { width: 8px; height: 2px; background: #444; display: block; }
.zoom-btn.plus { margin-right: 4px; }
.zoom-btn.plus i::after { content: ""; display: block; width: 2px; height: 8px; background: #444; margin: -3px 0 0 3px; }
.slider {
  width: 98px;
  height: 15px;
  display: flex;
  justify-content: center;
  background: linear-gradient(transparent 7px, #9ea3a9 7px, #9ea3a9 8px, transparent 8px);
}

/* taskbar */
.taskbar {
  height: 29px;
  display: flex;
  align-items: stretch;
  background: linear-gradient(#2c6ee8, #2d68e4 8%, #235ad6 40%, #2258d4 85%, #1c48ae);
  font-family: "Open Sans", "Noto Sans", sans-serif;
  font-size: 11px;
  color: #fff;
}
.start {
  width: 95px;
  flex: none;
  box-sizing: border-box;
  padding: 0 0 2px 10px;
  display: flex;
  align-items: center;
  gap: 4px;
  border-radius: 0 12px 12px 0;
  background: linear-gradient(#4fa04f, #3c8a3c 20%, #38863a 75%, #2d6f2f);
  box-shadow: inset -3px 0 4px rgba(0, 40, 0, .45);
  font-family: "Liberation Sans", sans-serif;
  font-size: 16.600px;
  font-weight: 700;
  font-style: italic;
  text-shadow: 1px 1px 1px #1c4a1c;
}
.tasks { display: flex; gap: 2px; padding: 4px 0 3px 11px; }
.task {
  width: 158px;
  box-sizing: border-box;
  padding-left: 10px;
  display: flex;
  align-items: center;
  gap: 3px;
  white-space: nowrap;
  border-radius: 2px;
  background: linear-gradient(#4180ee, #3c78ec);
}
.task span { margin-bottom: 3px; }
.task.active { background: #1c4fb4; box-shadow: inset 0 1px 2px rgba(0, 0, 40, .4); }
.lang { margin-left: auto; align-self: center; padding: 0 1px; font-size: 11px; background: #2c66c8; line-height: 16px; margin-right: 8px; }
.tray {
  width: 129px;
  flex: none;
  box-sizing: border-box;
  position: relative;
  display: flex;
  align-items: center;
  background: linear-gradient(#16a3ea, #108de0 40%, #0f87d8);
  border-left: 1px solid #0c3a8a;
}
.chevron {
  width: 17px;
  height: 17px;
  margin-left: -9px;
  flex: none;
  border-radius: 50%;
  display: flex;
  align-items: center;
  justify-content: center;
  background: radial-gradient(circle at 40% 35%, #7ab2f2, #1b5fd0);
  border: 1px solid #b5d4f5;
  box-sizing: content-box;
}
.tray-ico { margin-left: 1px; flex: none; }
.tray-ico.first { margin-left: 2px; }
.clock { margin-left: auto; margin-right: 13px; font-size: 11.500px; }
</style>
